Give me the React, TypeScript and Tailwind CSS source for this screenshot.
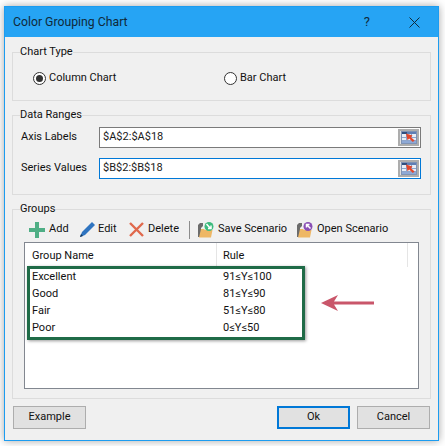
const font = { fontFamily: 'Roboto, "Noto Sans", sans-serif' };

const RangeIcon = () => (
  <svg width="16" height="13" viewBox="0 0 16 13">
    <rect x="0.5" y="0.5" width="15" height="12" fill="#e8eef7" stroke="#7f93b5" />
    <rect x="1" y="1" width="14" height="2" fill="#5f7fb5" />
    <rect x="1" y="1" width="5" height="2" fill="#2f4f7f" />
    <path d="M1 6.5H15M1 9.5H15M5.5 3V12M10.5 3V12" stroke="#8ea6cc" strokeWidth="1" />
    <rect x="1" y="10" width="14" height="2" fill="#8ea9d6" />
    <path d="M5 2.5L11.5 4.5L10 6.2L13.6 9.5L11.8 11L8.2 7.6L6.5 9.2Z" fill="#e2472b" />
  </svg>
);

const RangeInput = ({ value, active }: { value: string; active?: boolean }) => (
  <div
    className={`flex h-[21px] w-[322px] items-center justify-between border bg-white pl-[3px] pr-[1px] ${
      active ? "border-[#0078d7]" : "border-[#7a7a7a]"
    }`}>
    <span className="text-[11px] text-[#1a1a1a]">{value}</span>
    <div className="flex h-[17px] w-[21px] items-center justify-center border-2 border-[#adadad] bg-[#e1e1e1]">
      <RangeIcon />
    </div>
  </div>
);

const Radio = ({ checked }: { checked?: boolean }) => (
  <span className="flex h-[13px] w-[13px] items-center justify-center rounded-full border border-[#333333] bg-white">
    {checked && <span className="h-[7px] w-[7px] rounded-full bg-[#333333]" />}
  </span>
);

const FolderIcon = ({ badge, arrow }: { badge: string; arrow: string }) => (
  <svg width="16" height="16" viewBox="0 0 16 16">
    <path d="M0 15V3L2 1H5V4L3 6V15Z" fill="#6b6b6b" />
    <path d="M1 15.5L3 7H6L7 8H14.5L13 15.5Z" fill="#eeb765" />
    <circle cx="11" cy="4.5" r="4.5" fill={badge} />
    <path d={arrow} stroke="#ffffff" strokeWidth="1.5" fill="none" />
  </svg>
);

const Box = ({ title, className, children }: { title: string; className: string; children: React.ReactNode }) => (
  <fieldset className={`mx-[7px] border border-[#dcdcdc] ${className}`}>
    <legend className="ml-[7px] px-0 text-[11px] leading-[16px] text-[#111111]">{title}</legend>
    {children}
  </fieldset>
);

export default function App() {
  return (
    <div className="h-[446px] w-[445px] overflow-hidden bg-white pl-[4px] pt-[6px] text-[11px] text-[#111111]" style={font}>
      <div className="h-[435px] w-[435px] border border-[#1c9cf0] bg-[#f0f0f0] shadow-[0_0_8px_rgba(0,0,0,0.35)]">
        {/* Title bar */}
        <div className="flex h-[30px] items-center bg-[#26a4f4] pl-[8px]">
          <span className="flex-1 text-[12.25px] text-[#102a3a]">Color Grouping Chart</span>
          <span className="mr-[39px] text-[13px] text-[#102a3a]">?</span>
          <svg className="mr-[18px]" width="11" height="11" viewBox="0 0 11 11">
            <path d="M0.5 0.5L10.5 10.5M10.5 0.5L0.5 10.5" stroke="#102a3a" strokeWidth="1" />
          </svg>
        </div>

        {/* Chart type */}
        <Box title="Chart Type" className="mt-[7px] h-[57px]">
          <div className="flex items-center pl-[20px] pt-[10px]">
            <div className="flex w-[191px] items-center gap-[3px]">
              <Radio checked />
              <span>Column Chart</span>
            </div>
            <div className="flex items-center gap-[3px]">
              <Radio />
              <span>Bar Chart</span>
            </div>
          </div>
        </Box>

        {/* Data ranges */}
        <Box title="Data Ranges" className="mt-[6px] h-[88px]">
          <div className="flex flex-col gap-[10px] pt-[4px]">
            <div className="flex items-center">
              <span className="w-[86px] pl-[8px]">Axis Labels</span>
              <RangeInput value="$A$2:$A$18" />
            </div>
            <div className="flex items-center">
              <span className="w-[86px] pl-[8px]">Series Values</span>
              <RangeInput value="$B$2:$B$18" active />
            </div>
          </div>
        </Box>

        {/* Groups */}
        <Box title="Groups" className="mt-[6px] h-[198px]">
          <div className="flex h-[25px] items-center pl-[16px]">
            <div className="flex w-[50px] items-center gap-[4px]">
              <svg width="16" height="16" viewBox="0 0 16 16">
                <path d="M6 0H10V6H16V10H10V16H6V10H0V6H6Z" fill="#4fae85" />
              </svg>
              <span>Add</span>
            </div>
            <div className="flex w-[50px] items-center gap-[2px]">
              <svg width="17" height="17" viewBox="0 0 17 17">
                <path d="M13 1L16 4L6 14L1 16L3 11Z" fill="#2f74c0" />
                <path d="M1 16L2 13L4 15Z" fill="#173a60" />
              </svg>
              <span>Edit</span>
            </div>
            <div className="flex w-[60px] items-center gap-[4px]">
              <svg width="15" height="15" viewBox="0 0 15 15">
                <path d="M1 1L14 14M14 1L1 14" stroke="#e0694d" strokeWidth="2.4" />
              </svg>
              <span>Delete</span>
            </div>
            <div className="mr-[8px] h-[18px] w-px bg-[#8c8c8c]" />
            <div className="flex w-[99px] items-center gap-[4px]">
              <FolderIcon badge="#3dbb7e" arrow="M8.5 2L12.5 6.5M13 3.5V6.5H10" />
              <span>Save Scenario</span>
            </div>
            <div className="flex items-center gap-[4px]">
              <FolderIcon badge="#8a4fb5" arrow="M13.5 6.5L9.5 2.5M9.5 5.5V2.5H12.5" />
              <span>Open Scenario</span>
            </div>
          </div>

          {/* Group list */}
          <div className="relative ml-[11px] h-[147px] w-[395px] border border-[#828790] bg-white">
            <div className="flex h-[24px] items-center">
              <div className="h-full w-[192px] border-r border-[#e5e5e5] pl-[7px] leading-[26px]">Group Name</div>
              <div className="h-full w-[191px] border-r border-[#e5e5e5] pl-[6px] leading-[26px]">Rule</div>
            </div>
            <div className="flex flex-col pt-[1px]">
              {[
                ["Excellent", "91≤Y≤100"],
                ["Good", "81≤Y≤90"],
                ["Fair", "51≤Y≤80"],
                ["Poor", "0≤Y≤50"],
              ].map(([name, rule]) => (
                <div key={name} className="flex h-[17px] items-center leading-[17px]">
                  <span className="w-[192px] pl-[7px]">{name}</span>
                  <span className="pl-[6px]">{rule}</span>
                </div>
              ))}
            </div>

            {/* Annotation over the list */}
            <div className="absolute left-[2px] top-[23px] h-[74px] w-[278px] border-[3px] border-[#1f6b47] shadow-[1px_1px_3px_rgba(0,0,0,0.4)]" />
            <svg className="absolute left-[296px] top-[50px]" width="55" height="20" viewBox="0 0 55 20">
              <path d="M0 10L17 2L13 8.5H53V11.5H13L17 18Z" fill="#c9566a" />
            </svg>
          </div>
        </Box>

        {/* Footer buttons */}
        <div className="mt-[7px] flex items-center px-[8px]">
          <button className="h-[23px] w-[73px] border border-[#adadad] bg-[#e1e1e1]">Example</button>
          <button className="ml-auto h-[23px] w-[73px] border-2 border-[#0078d7] bg-[#e1e1e1]">Ok</button>
          <button className="ml-[7px] h-[23px] w-[73px] border border-[#adadad] bg-[#e1e1e1]">Cancel</button>
        </div>
      </div>
    </div>
  );
}
